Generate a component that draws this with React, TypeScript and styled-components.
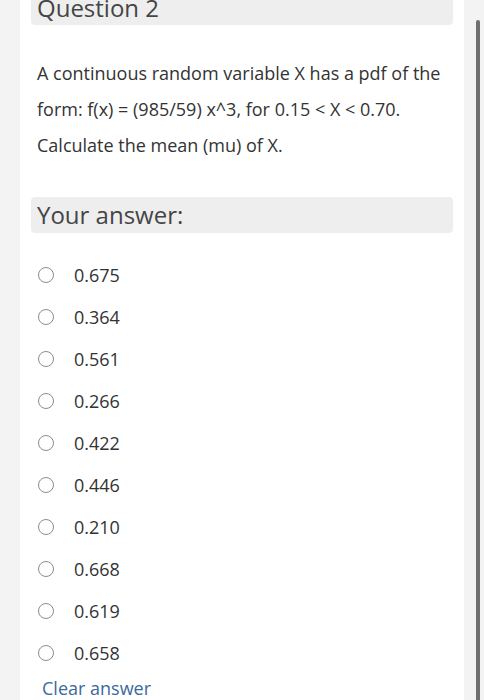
import React from "react";
import styled, { createGlobalStyle } from "styled-components";

const Global = createGlobalStyle`
  html, body { margin: 0; padding: 0; background: #f3f3f3; }
  body { font-family: "Open Sans", "Liberation Sans", sans-serif; overflow: hidden; }
`;

const Page = styled.div`
  display: flex;
  width: 484px;
  height: 700px;
  overflow: hidden;
  background: #f3f3f3;
`;

const Gutter = styled.div`
  width: 20px;
  flex: none;
`;

const RightGutter = styled.div`
  width: 20px;
  flex: none;
  display: flex;
  justify-content: flex-end;
  padding-right: 4px;
  box-sizing: border-box;
`;

const ScrollThumb = styled.div`
  width: 4px;
  margin-top: 20px;
  height: 700px;
  background: #6f6f6f;
  border-radius: 2px;
`;

const Card = styled.div`
  flex: 1;
  background: #ffffff;
  padding: 0 11px;
  margin-top: -11px;
  display: flex;
  flex-direction: column;
`;

const TitleBar = styled.div`
  background: #eeeeee;
  border-radius: 0 0 4px 4px;
  padding: 4px 6px 2px;
  font-size: 24px;
  line-height: 30px;
  color: #454545;
`;

const Body = styled.p`
  margin: 30px 0 0;
  padding: 0 6px;
  font-size: 18px;
  line-height: 36px;
  color: #333333;
`;

const AnswerBar = styled.div`
  margin-top: 34px;
  background: #eeeeee;
  border-radius: 4px;
  padding: 3px 6px;
  font-size: 24px;
  line-height: 30px;
  color: #454545;
`;

const Options = styled.div`
  display: flex;
  flex-direction: column;
  margin-top: 21px;
  padding-left: 6px;
`;

const Option = styled.label`
  display: flex;
  align-items: center;
  height: 42px;
  font-size: 18px;
  color: #333333;
`;

const Radio = styled.span`
  width: 14px;
  height: 14px;
  border: 1.5px solid #8c8c8c;
  border-radius: 50%;
  margin-left: 1px;
  margin-right: 20px;
  flex: none;
`;

const Clear = styled.div`
  padding-left: 11px;
  font-size: 18px;
  line-height: 24px;
  color: #3b6a9c;
  margin-top: 2px;
`;

const values = ["0.675", "0.364", "0.561", "0.266", "0.422", "0.446", "0.210", "0.668", "0.619", "0.658"];

export default function App() {
  return (
    <>
      <Global />
      <Page>
        <Gutter />
        <Card>
          <TitleBar>Question 2</TitleBar>
          <Body>
            A continuous random variable X has a pdf of the form: f(x) = (985/59) x^3, for 0.15 &lt; X &lt; 0.70.
            Calculate the mean (mu) of X.
          </Body>
          <AnswerBar>Your answer:</AnswerBar>
          <Options>
            {values.map((v) => (
              <Option key={v}>
                <Radio />
                {v}
              </Option>
            ))}
          </Options>
          <Clear>Clear answer</Clear>
        </Card>
        <RightGutter>
          <ScrollThumb />
        </RightGutter>
      </Page>
    </>
  );
}
